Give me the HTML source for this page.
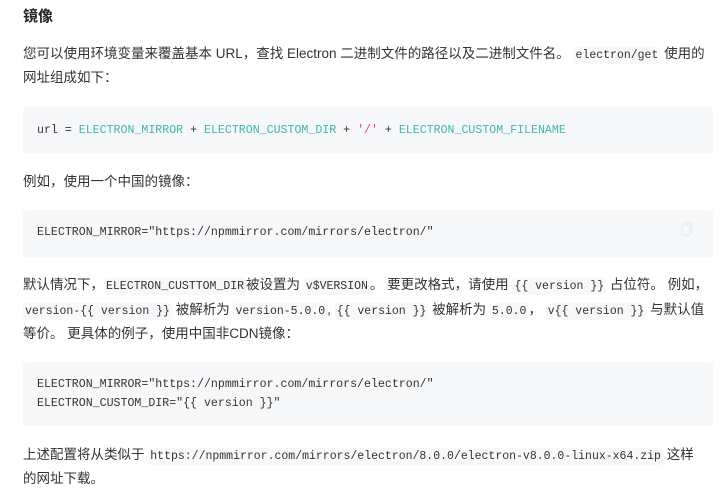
<!DOCTYPE html>
<html><head><meta charset="utf-8"><style>
body{margin:0;background:#fff;width:720px;height:495px;overflow:hidden;font-family:"Liberation Sans","Noto Sans CJK SC",sans-serif;color:#333;font-size:13.5px}
.a{position:absolute;left:23px;white-space:nowrap;line-height:20px}
code{font-family:"Liberation Mono",monospace;font-size:11.5px}
.m{font-family:"Liberation Mono",monospace;font-size:11.6px}
code{background:#f7f8fa;padding:2px 2px;border-radius:3px;color:#333}
.blk{position:absolute;left:23px;width:690px;background:#f6f7f9;border-radius:4px}
.c{color:#3fb6b0}.s{color:#e0457b}
</style></head><body>
<div class="a" style="top:7px;font-size:15px;font-weight:bold;color:#222">镜像</div>
<div class="a" style="top:44px">您可以使用环境变量来覆盖基本 URL，查找 Electron 二进制文件的路径以及二进制文件名。 <code>electron/get</code> 使用的</div>
<div class="a" style="top:68px">网址组成如下：</div>
<div class="blk" style="top:107px;height:46px"></div>
<div class="a m" style="top:121px;left:37px">url = <span class="c">ELECTRON_MIRROR</span> + <span class="c">ELECTRON_CUSTOM_DIR</span> + <span class="s">'/'</span> + <span class="c">ELECTRON_CUSTOM_FILENAME</span></div>
<div class="a" style="top:172px">例如，使用一个中国的镜像：</div>
<div class="blk" style="top:210px;height:47px"></div>
<svg style="position:absolute;left:681px;top:222px" width="12" height="14" viewBox="0 0 12 14"><rect x="3" y="1" width="8" height="10" rx="1" fill="none" stroke="#e6e8eb"/><rect x="1" y="3" width="8" height="10" rx="1" fill="#f6f7f9" stroke="#e6e8eb"/></svg>
<div class="a m" style="top:223px;left:37px">ELECTRON_MIRROR="https://npmmirror.com/mirrors/electron/"</div>
<div class="a" style="top:275px">默认情况下，<code>ELECTRON_CUSTTOM_DIR</code>被设置为 <code>v$VERSION</code>。 要更改格式，请使用 <code>{{ version }}</code> 占位符。 例如，</div>
<div class="a" style="top:300px"><code>version-{{ version }}</code> 被解析为 <code>version-5.0.0</code>, <code>{{ version }}</code> 被解析为 <code>5.0.0</code>， <code>v{{ version }}</code> 与默认值</div>
<div class="a" style="top:324px">等价。 更具体的例子，使用中国非CDN镜像：</div>
<div class="blk" style="top:362px;height:64px"></div>
<div class="a m" style="top:375px;left:37px">ELECTRON_MIRROR="https://npmmirror.com/mirrors/electron/"</div>
<div class="a m" style="top:394px;left:37px">ELECTRON_CUSTOM_DIR="{{ version }}"</div>
<div class="a" style="top:445px">上述配置将从类似于 <code>https://npmmirror.com/mirrors/electron/8.0.0/electron-v8.0.0-linux-x64.zip</code> 这样</div>
<div class="a" style="top:469px">的网址下载。</div>
</body></html>
